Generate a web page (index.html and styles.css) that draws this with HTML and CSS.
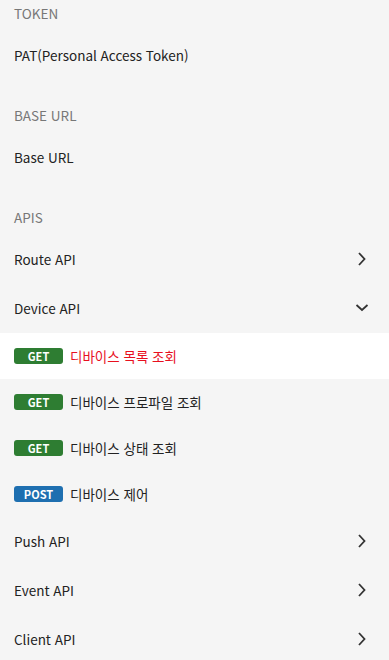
FILE: index.html
```html
<!DOCTYPE html>
<html lang="ko">
<head>
    <meta charset="UTF-8">
    <meta name="viewport" content="width=device-width, initial-scale=1.0">
    <title>API Docs</title>
    <link rel="stylesheet" href="styles.css">
</head>
<body>

    <nav class="sidebar">
        <div class="section">
            <div class="section-title">TOKEN</div>
            <div class="menu-item">PAT(Personal Access Token)</div>
        </div>

        <div class="section">
            <div class="section-title">BASE URL</div>
            <div class="menu-item">Base URL</div>
        </div>

        <div class="section">
            <div class="section-title">APIS</div>
            <div class="menu-item">
                <span>Route API</span>
                <svg class="chevron" width="14" height="14" viewBox="0 0 14 14"><path d="M4 1 L9.5 7 L4 13" fill="none" stroke="#333" stroke-width="1.8"/></svg>
            </div>
            <div class="menu-item">
                <span>Device API</span>
                <svg class="chevron" width="14" height="14" viewBox="0 0 14 14"><path d="M1.5 4 L7 9 L12.5 4" fill="none" stroke="#333" stroke-width="1.8"/></svg>
            </div>
            <div class="sub-item active">
                <span class="method get">GET</span>
                <span>디바이스 목록 조회</span>
            </div>
            <div class="sub-item">
                <span class="method get">GET</span>
                <span>디바이스 프로파일 조회</span>
            </div>
            <div class="sub-item">
                <span class="method get">GET</span>
                <span>디바이스 상태 조회</span>
            </div>
            <div class="sub-item">
                <span class="method post">POST</span>
                <span>디바이스 제어</span>
            </div>
            <div class="menu-item">
                <span>Push API</span>
                <svg class="chevron" width="14" height="14" viewBox="0 0 14 14"><path d="M4 1 L9.5 7 L4 13" fill="none" stroke="#333" stroke-width="1.8"/></svg>
            </div>
            <div class="menu-item">
                <span>Event API</span>
                <svg class="chevron" width="14" height="14" viewBox="0 0 14 14"><path d="M4 1 L9.5 7 L4 13" fill="none" stroke="#333" stroke-width="1.8"/></svg>
            </div>
            <div class="menu-item">
                <span>Client API</span>
                <svg class="chevron" width="14" height="14" viewBox="0 0 14 14"><path d="M4 1 L9.5 7 L4 13" fill="none" stroke="#333" stroke-width="1.8"/></svg>
            </div>
        </div>
    </nav>

</body>
</html>
```

FILE: styles.css
```css
body {
    margin: 0;
    font-family: 'Noto Sans CJK KR', 'Noto Sans', sans-serif;
    background-color: #f5f5f5;
    color: #222;
    font-size: 13.5px;
    overflow: hidden;
}
.sidebar {
    width: 389px;
}
.section {
    margin-bottom: 22px;
}
.section-title {
    height: 31px;
    line-height: 27px;
    padding: 0 14px;
    color: #777;
}
.menu-item {
    display: flex;
    align-items: center;
    justify-content: space-between;
    box-sizing: border-box;
    height: 49px;
    padding: 0 20px 2px 14px;
}
.sub-item {
    display: flex;
    align-items: center;
    gap: 7px;
    box-sizing: border-box;
    height: 46px;
    padding: 0 14px 1px;
}
.sub-item.active {
    background: white;
    color: #e8101e;
}
.method {
    display: inline-block;
    width: 49px;
    height: 16px;
    line-height: 16px;
    border-radius: 3px;
    color: white;
    font-size: 11px;
    font-weight: bold;
    text-align: center;
}
.method.get {
    background-color: #2e7d32;
}
.method.post {
    background-color: #1e6fb0;
}
.chevron {
    display: block;
}
```
